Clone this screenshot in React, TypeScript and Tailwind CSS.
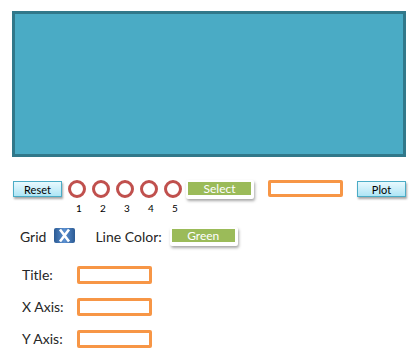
const font = { fontFamily: 'Lato, "Liberation Sans", sans-serif' };

const PlainButton = ({ label }: { label: string }) => (
  <button className="w-[49px] h-[16px] border border-[#4bacc6] bg-gradient-to-b from-[#e8f9fe] to-[#aee5f5] shadow-[1px_2px_2px_rgba(0,0,0,0.35)] text-[11px] leading-none text-black flex items-center justify-center">
    {label}
  </button>
);

const GreenPick = ({ label }: { label: string }) => (
  <div className="w-[68px] h-[19px] bg-white rounded-[2px] shadow-[1px_2px_3px_rgba(0,0,0,0.35)] pl-[2px] pt-[2px]">
    <div className="w-[63px] h-[13px] bg-[#9bbb59] text-white text-[12px] leading-[13px] text-center">
      {label}
    </div>
  </div>
);

const OrangeBox = ({ w = 'w-[75px]', h = 'h-[18px]' }: { w?: string; h?: string }) => (
  <div className={`${w} ${h} border-[3px] border-[#f79646] rounded-[2px] bg-white`} />
);

const GridIcon = () => (
  <svg width="21" height="15" viewBox="0 0 21 15">
    <defs>
      <linearGradient id="gi" x1="0" x2="1" y1="0" y2="0">
        <stop offset="0" stopColor="#2c5b94" />
        <stop offset="0.5" stopColor="#5a8fd0" />
        <stop offset="1" stopColor="#2c5b94" />
      </linearGradient>
    </defs>
    <rect x="0" y="0" width="21" height="15" rx="2" fill="url(#gi)" />
    <path d="M6 1.5 L15 13.5 M15 1.5 L6 13.5" stroke="#fff" strokeWidth="2.6" />
  </svg>
);

const FormRow = ({ label }: { label: string }) => (
  <div className="flex items-center h-[18px]">
    <span className="w-[55px] pl-[22px] box-content text-[14px] leading-[18px] text-[#262626] whitespace-nowrap">{label}</span>
    <OrangeBox />
  </div>
);

export default function App() {
  return (
    <div className="w-[420px] h-[361px] bg-white overflow-hidden" style={font}>
      {/* chart area */}
      <div className="mt-[11px] ml-[12px] w-[394px] h-[146px] border-[3px] border-[#31788a] bg-[#4aabc5]" />

      {/* controls */}
      <div className="flex items-start mt-[23px] h-[36px]">
        <div className="ml-[13px] mt-[1px]">
          <PlainButton label="Reset" />
        </div>
        <div className="flex gap-[6px] ml-[6px]">
          {[1, 2, 3, 4, 5].map(n => (
            <div key={n} className="flex flex-col items-center w-[18px]">
              <div className="w-[18px] h-[18px] rounded-full border-[3px] border-[#c0504d]" />
              <span className="text-[10px] leading-none mt-[5px] ml-[4px] text-black">{n}</span>
            </div>
          ))}
        </div>
        <div className="ml-[4px]">
          <GreenPick label="Select" />
        </div>
        <div className="ml-[14px]">
          <OrangeBox h="h-[17px]" />
        </div>
        <div className="ml-[14px] mt-[1px]">
          <PlainButton label="Plot" />
        </div>
      </div>

      {/* grid + line color */}
      <div className="flex items-center mt-[11px] h-[19px]">
        <span className="ml-[20px] text-[14px] leading-[19px] text-[#262626]">Grid</span>
        <div className="ml-[8px] -mt-[3px]">
          <GridIcon />
        </div>
        <span className="ml-[20px] text-[14px] leading-[19px] text-[#262626]">Line Color:</span>
        <div className="ml-[8px]">
          <GreenPick label="Green" />
        </div>
      </div>

      {/* text fields */}
      <div className="flex flex-col gap-[14px] mt-[20px]">
        <FormRow label="Title:" />
        <FormRow label="X Axis:" />
        <FormRow label="Y Axis:" />
      </div>
    </div>
  );
}
